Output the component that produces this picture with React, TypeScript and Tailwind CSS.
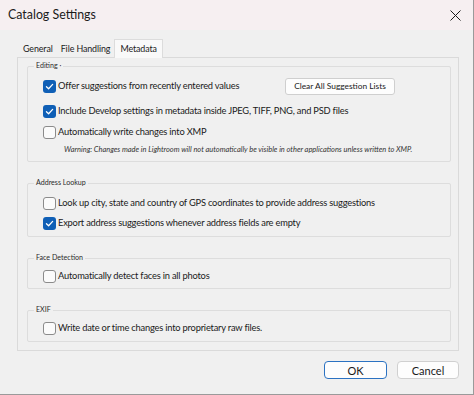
import React from 'react';

type CheckRowProps = {
  checked?: boolean;
  label: string;
  className?: string;
  children?: React.ReactNode;
};

const CheckRow: React.FC<CheckRowProps> = ({ checked, label, className, children }) => (
  <div className={`flex items-center h-[20px] ${className ?? ''}`}>
    {checked ? (
      <span className="w-[13px] h-[13px] rounded-[3px] bg-[#0f5fb6] flex items-center justify-center shrink-0">
        <svg width="9" height="9" viewBox="0 0 10 10" fill="none">
          <path d="M1.6 5.2 L4 7.5 L8.5 2.6" stroke="#ffffff" strokeWidth="1.4" strokeLinecap="round" strokeLinejoin="round" />
        </svg>
      </span>
    ) : (
      <span className="w-[13px] h-[13px] rounded-[3px] bg-[#fbfbfb] border border-[#8b8b8b] shrink-0" />
    )}
    <span className="ml-[2px] text-[9.3px] tracking-[-0.2px] text-[#1a1a1a] whitespace-nowrap">{label}</span>
    {children}
  </div>
);

const GroupBox: React.FC<{ title: string; className?: string; children: React.ReactNode }> = ({
  title,
  className,
  children,
}) => (
  <div className={`relative border border-[#dddddd] rounded-[2px] pl-[15px] ${className ?? ''}`}>
    <span className="absolute -top-[6px] left-[6px] px-[2px] bg-[#f0f0f0] text-[7.1px] leading-[10px] text-[#2a2a2a]">
      {title}
    </span>
    {children}
  </div>
);

export default function App() {
  return (
    <div
      className="w-[474px] h-[395px] bg-[#f0f0f0] flex flex-col border-r border-b border-[#9a9a9a]"
      style={{ fontFamily: 'Lato, "Noto Sans", sans-serif' }}
    >
      {/* Title bar */}
      <div className="h-[30px] bg-[#f6eff1] flex items-center justify-between pl-[8px] pr-[12px] shrink-0">
        <span className="text-[12.4px] text-[#1b1b1b]">Catalog Settings</span>
        <svg width="11" height="11" viewBox="0 0 11 11">
          <path d="M0.5 0.5 L10.5 10.5 M10.5 0.5 L0.5 10.5" stroke="#1b1b1b" strokeWidth="1" />
        </svg>
      </div>

      {/* Tabs */}
      <div className="flex items-end ml-[17px] mt-[8px] h-[19px] text-[8.9px] tracking-[-0.1px] text-[#1a1a1a]">
        <div className="pl-[6px] pr-[4px] h-[17px] flex items-center">General</div>
        <div className="px-[4px] h-[17px] flex items-center">File Handling</div>
        <div className="px-[5px] h-[19px] flex items-center bg-[#f9f9f9] border border-b-0 border-[#dcdcdc] -mb-px relative z-10">
          Metadata
        </div>
      </div>

      {/* Tab panel */}
      <div className="ml-[17px] w-[442px] border border-[#dadada] bg-[#f0f0f0] pt-[8px] pl-[9px] pr-[7px] pb-[8px]">
        <GroupBox title="Editing ·" className="pt-[9px] pb-[5px]">
          <CheckRow checked label="Offer suggestions from recently entered values">
            <button className="ml-auto mr-[55px] w-[110px] h-[17px] bg-[#fdfdfd] border border-[#cfcfcf] rounded-[3px] text-[8.4px] text-[#1a1a1a] leading-none">
              Clear All Suggestion Lists
            </button>
          </CheckRow>
          <CheckRow
            checked
            className="mt-[5px]"
            label="Include Develop settings in metadata inside JPEG, TIFF, PNG, and PSD files"
          />
          <CheckRow className="mt-[1px]" label="Automatically write changes into XMP" />
          <div className="mt-[2px] ml-[21px] h-[12px] leading-[12px] text-[7.45px] italic text-[#333333] whitespace-nowrap">
            Warning: Changes made in Lightroom will not automatically be visible in other applications unless written to XMP.
          </div>
        </GroupBox>

        <GroupBox title="Address Lookup" className="mt-[21px] pt-[9px] pb-[3px]">
          <CheckRow label="Look up city, state and country of GPS coordinates to provide address suggestions" />
          <CheckRow checked label="Export address suggestions whenever address fields are empty" />
        </GroupBox>

        <GroupBox title="Face Detection" className="mt-[21px] pt-[7px] pb-[2px]">
          <CheckRow label="Automatically detect faces in all photos" />
        </GroupBox>

        <GroupBox title="EXIF" className="mt-[21px] pt-[7px] pb-[3px]">
          <CheckRow label="Write date or time changes into proprietary raw files." />
        </GroupBox>
      </div>

      {/* Footer */}
      <div className="flex justify-end gap-[10px] mt-[10px] pr-[14px]">
        <button className="w-[63px] h-[18px] bg-[#fdfdfd] border-[1.5px] border-[#2b72c2] rounded-[4px] text-[11px] text-[#1a1a1a] leading-none">
          OK
        </button>
        <button className="w-[62px] h-[18px] bg-[#fdfdfd] border border-[#d0d0d0] rounded-[4px] text-[11px] text-[#1a1a1a] leading-none">
          Cancel
        </button>
      </div>
    </div>
  );
}
